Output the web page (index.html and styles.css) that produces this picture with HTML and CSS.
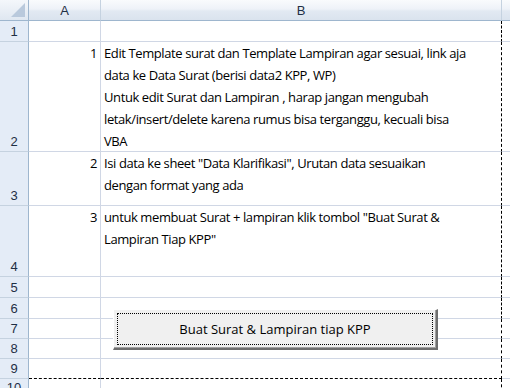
FILE: index.html
```html
<!DOCTYPE html>
<html>
<head>
<meta charset="utf-8">
<link rel="stylesheet" href="styles.css">
</head>
<body>
<div class="sheet">
  <div class="corner"><span class="tri"></span></div>
  <div class="colhead">A</div>
  <div class="colhead">B</div>
  <div class="colhead last"></div>

  <div class="rowhead">1</div>
  <div class="cell"></div>
  <div class="cell b"></div>
  <div class="cell c"></div>

  <div class="rowhead">2</div>
  <div class="cell num">1</div>
  <div class="cell b text">Edit Template surat dan Template Lampiran agar sesuai, link aja<br>data ke Data Surat (berisi data2 KPP, WP)<br>Untuk edit Surat dan Lampiran , harap jangan mengubah<br>letak/insert/delete karena rumus bisa terganggu, kecuali bisa<br>VBA</div>
  <div class="cell c"></div>

  <div class="rowhead">3</div>
  <div class="cell num">2</div>
  <div class="cell b text">Isi data ke sheet "Data Klarifikasi", Urutan data sesuaikan<br>dengan format yang ada</div>
  <div class="cell c"></div>

  <div class="rowhead">4</div>
  <div class="cell num">3</div>
  <div class="cell b text">untuk membuat Surat + lampiran klik tombol "Buat Surat &amp;<br>Lampiran Tiap KPP"</div>
  <div class="cell c"></div>

  <div class="rowhead">5</div>
  <div class="cell"></div>
  <div class="cell b"></div>
  <div class="cell c"></div>

  <div class="rowhead">6</div>
  <div class="cell"></div>
  <div class="cell b"></div>
  <div class="cell c"></div>

  <div class="rowhead">7</div>
  <div class="cell"></div>
  <div class="cell b"></div>
  <div class="cell c"></div>

  <div class="rowhead">8</div>
  <div class="cell"></div>
  <div class="cell b"></div>
  <div class="cell c"></div>

  <div class="rowhead">9</div>
  <div class="cell brk"></div>
  <div class="cell b brk"></div>
  <div class="cell c"></div>

  <div class="rowhead r10">10</div>
  <div class="cell"></div>
  <div class="cell b"></div>
  <div class="cell c"></div>

  <button class="macro-btn"><span class="focus">Buat Surat &amp; Lampiran tiap KPP</span></button>
</div>
</body>
</html>
```

FILE: styles.css
```css
html, body {
  margin: 0;
  padding: 0;
  background: #ffffff;
  overflow: hidden;
}

.sheet {
  position: relative;
  width: 510px;
  height: 388px;
  display: grid;
  grid-template-columns: 29px 72px 401px 8px;
  grid-template-rows: 21px 21px 110px 54px 71px 21px 21px 20px 20px 20px 1fr;
  font-family: "Comic Sans MS", "Open Sans", sans-serif;
}

.sheet > div {
  box-sizing: border-box;
}

.corner {
  position: relative;
  background: linear-gradient(#f4f7fb, #dfe7f1);
  border-right: 1px solid #9eb6ce;
  border-bottom: 1px solid #9eb6ce;
}

.tri {
  position: absolute;
  right: 3px;
  bottom: 3px;
  width: 14px;
  height: 14px;
  background: #b9c9dc;
  clip-path: polygon(100% 0, 100% 100%, 0 100%);
}

.colhead {
  background: linear-gradient(#f9fbfd 0%, #eef2f8 45%, #e2e9f2 55%, #dae3ee 100%);
  border-right: 1px solid #c5d2e0;
  border-bottom: 1px solid #9eb6ce;
  font-family: "Liberation Sans", Arial, sans-serif;
  font-size: 13px;
  color: #1f2f45;
  display: flex;
  align-items: center;
  justify-content: center;
}

.colhead.last {
  border-right: none;
}

.rowhead {
  background: #e4ecf7;
  border-right: 1px solid #9eb6ce;
  border-bottom: 1px solid #c5d2e0;
  font-family: "Liberation Sans", Arial, sans-serif;
  font-size: 13px;
  color: #1f2f45;
  display: flex;
  align-items: flex-end;
  justify-content: center;
  padding-bottom: 2px;
}

.rowhead.r10 {
  align-items: flex-start;
  padding-top: 1px;
}

.cell {
  border-right: 1px solid #d0d7e5;
  border-bottom: 1px solid #d0d7e5;
  font-size: 13px;
  letter-spacing: -0.4px;
  line-height: 22px;
  color: #000;
}

.cell.b {
  border-right: 1px dashed #000;
}

.cell.c {
  border-right: none;
}

.cell.brk {
  border-bottom: 1px dashed #000;
}

.num {
  text-align: right;
  padding-right: 3px;
}

.text {
  padding-left: 3px;
  white-space: nowrap;
  overflow: hidden;
}

.macro-btn {
  position: absolute;
  left: 113px;
  top: 309px;
  width: 325px;
  height: 41px;
  box-sizing: border-box;
  margin: 0;
  padding: 3px;
  background: #f0f0f0;
  border-style: solid;
  border-width: 1px 2px 2px 1px;
  border-color: #ffffff #6e6e6e #6e6e6e #ffffff;
  box-shadow: inset -1px -1px 0 #a0a0a0;
  font-family: "Comic Sans MS", "Open Sans", sans-serif;
  font-size: 13px;
  color: #000;
  display: flex;
}

.focus {
  flex: 1;
  border: 1px dotted #000;
  display: flex;
  align-items: center;
  justify-content: center;
}
```
